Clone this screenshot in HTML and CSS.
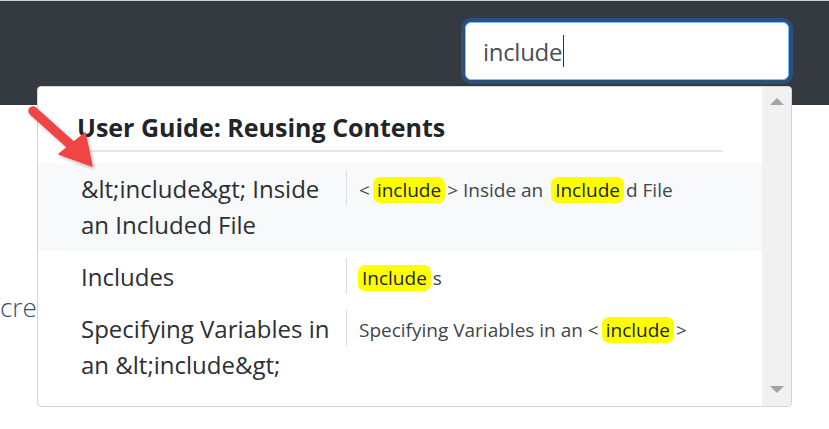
FILE: index.html
```html
<!DOCTYPE html>
<html>
<head>
<meta charset="utf-8">
<link rel="stylesheet" href="styles.css">
</head>
<body>
<div class="page">
  <header class="navbar">
    <div class="search">
      <span class="search-text">include</span><span class="caret"></span>
    </div>
  </header>
  <main class="content">
    <p class="lead">create</p>
  </main>

  <div class="dropdown">
    <div class="list">
      <div class="group-title">User Guide: Reusing Contents</div>
      <div class="item active">
        <div class="item-title">&amp;lt;include&amp;gt; Inside an Included File</div>
        <div class="item-match">&lt;<mark>include</mark>&gt; Inside an <mark>Include</mark>d File</div>
      </div>
      <div class="item">
        <div class="item-title">Includes</div>
        <div class="item-match"><mark class="lead-mark">Include</mark>s</div>
      </div>
      <div class="item">
        <div class="item-title">Specifying Variables in an &amp;lt;include&amp;gt;</div>
        <div class="item-match">Specifying Variables in an &lt;<mark>include</mark>&gt;</div>
      </div>
    </div>
    <div class="scrollbar">
      <span class="arrow up"></span>
      <span class="arrow down"></span>
    </div>
  </div>

  <svg class="pointer" width="110" height="80" viewBox="0 100 110 80">
    <defs>
      <filter id="sh" x="-20%" y="-20%" width="140%" height="140%">
        <feDropShadow dx="1.5" dy="2" stdDeviation="1.5" flood-color="#000" flood-opacity="0.25"/>
      </filter>
    </defs>
    <g filter="url(#sh)" fill="#f04444" stroke="#f04444">
      <line x1="33" y1="111" x2="72" y2="146" stroke-width="9.5" stroke-linecap="round"/>
      <polygon points="59,154 85,133 92,166" stroke-width="1.5" stroke-linejoin="round"/>
    </g>
  </svg>
</div>
</body>
</html>
```

FILE: styles.css
```css
* { box-sizing: border-box; }
html, body { margin: 0; padding: 0; background: #fff; }
body { font-family: "Open Sans", "Noto Sans", sans-serif; color: #212529; }

.page { position: relative; width: 829px; height: 429px; overflow: hidden; }

.navbar {
  height: 105px;
  background: #343a40;
  border-top: 1px solid #cfd0d2;
  display: flex;
  justify-content: flex-end;
  padding: 21px 40px 0 0;
}

.search {
  width: 324px;
  height: 58px;
  background: #fff;
  border: 1px solid #80bdff;
  border-radius: 6px;
  box-shadow: 0 0 0 4px #2b5079;
  display: flex;
  align-items: center;
  padding-left: 17px;
}
.search-text { font-size: 24px; color: #495057; letter-spacing: -0.3px; }
.caret { width: 1px; height: 32px; background: #333; margin-left: 1px; }

.content { padding-top: 184px; }
.lead {
  margin: 0;
  font-size: 26px;
  line-height: 36px;
  font-weight: 300;
  color: #35506b;
}

.dropdown {
  position: absolute;
  left: 37px;
  top: 86px;
  width: 755px;
  height: 321px;
  background: #fff;
  border: 1px solid #d3d3d3;
  border-radius: 4px;
  display: flex;
  overflow: hidden;
}

.list { flex: 1; }

.group-title {
  margin: 0 39px 11px 39px;
  padding: 24px 0 6px 0;
  font-size: 25px;
  line-height: 33px;
  font-weight: 700;
  color: #212529;
  border-bottom: 2px solid #e6e6e6;
}

.item {
  display: flex;
  align-items: flex-start;
  padding: 8px 0 8px 43px;
}
.item.active { background: #f8f9fa; }

.item-title {
  width: 265px;
  padding-right: 8px;
  font-size: 24px;
  line-height: 36px;
  color: #2b2f33;
}

.item-match {
  margin-top: -1px;
  border-left: 1px solid #dcdfe2;
  padding: 7px 0 3px 12px;
  font-size: 19px;
  line-height: 26px;
  color: #3f454b;
  white-space: nowrap;
}

mark {
  display: inline-block;
  background: #ffff00;
  color: #212529;
  border-radius: 7px;
  padding: 0 4px;
  margin: 0 2px 0 3px;
  line-height: 26px;
}
mark.lead-mark { margin-left: -1px; }

.scrollbar {
  width: 29px;
  background: #f1f1f1;
  display: flex;
  flex-direction: column;
  justify-content: space-between;
  align-items: center;
  padding: 11px 0 13px 0;
}
.arrow { width: 0; height: 0; border-left: 7px solid transparent; border-right: 7px solid transparent; }
.arrow.up { border-bottom: 7px solid #a3a3a3; }
.arrow.down { border-top: 7px solid #a3a3a3; }

.pointer { position: absolute; left: 0; top: 100px; }
```
